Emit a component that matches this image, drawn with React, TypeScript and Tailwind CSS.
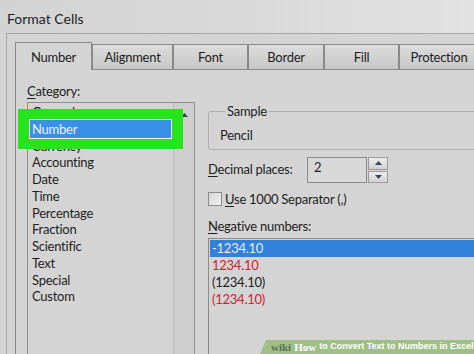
import React from "react";

const CATEGORIES = [
  "General",
  "Number",
  "Currency",
  "Accounting",
  "Date",
  "Time",
  "Percentage",
  "Fraction",
  "Scientific",
  "Text",
  "Special",
  "Custom",
];

const TABS = [
  { label: "Number", w: "w-[77px]", active: true },
  { label: "Alignment", w: "w-[81px]", active: false },
  { label: "Font", w: "w-[75px]", active: false },
  { label: "Border", w: "w-[76px]", active: false },
  { label: "Fill", w: "w-[75px]", active: false },
  { label: "Protection", w: "w-[80px]", active: false },
];

const NEGATIVES = [
  { text: "-1234.10", cls: "bg-[#3180da] text-[#e3eeff]" },
  { text: "1234.10", cls: "text-[#d0202e]" },
  { text: "(1234.10)", cls: "text-[#1c1c1c]" },
  { text: "(1234.10)", cls: "text-[#d0202e]" },
];

function Arrow({ up }: { up: boolean }) {
  return (
    <svg width="7" height="4" viewBox="0 0 7 4">
      <path d={up ? "M0 4 L3.5 0 L7 4 Z" : "M0 0 L3.5 4 L7 0 Z"} fill="#34465e" />
    </svg>
  );
}

export default function App() {
  return (
    <div className="relative w-[474px] h-[354px] overflow-hidden bg-[#d4d4d4] text-[#1e1e1e] font-['Lato',sans-serif] text-[13px] tracking-[-0.25px]">
      {/* title bar */}
      <div className="h-[33px] flex items-center pl-[7px] pt-[3px] text-[14px] tracking-normal bg-gradient-to-r from-[#d3d3d3] via-[#d9d9d9] to-[#e2e2e2]">
        Format Cells
      </div>

      <div className="ml-[6px] h-[321px] border-l border-t border-[#a6a6a6] pl-[8px] pt-[8px]">
        {/* tabs */}
        <div className="flex items-end h-[28px]">
          {TABS.map((t) =>
            t.active ? (
              <div
                key={t.label}
                className={`${t.w} shrink-0 h-[28px] border-l border-t border-r border-[#8a8a8a] bg-[#d4d4d4] flex items-center justify-center pt-[3px]`}
              >
                {t.label}
              </div>
            ) : (
              <div
                key={t.label}
                className={`${t.w} shrink-0 h-[26px] border border-[#8a8a8a] bg-gradient-to-b from-[#dcdcdc] to-[#c7c7c7] flex items-center justify-center pt-[2px]`}
              >
                {t.label}
              </div>
            )
          )}
        </div>

        {/* tab page */}
        <div className="flex h-[300px] border-l border-[#8a8a8a] pl-[11px]">
          {/* category column */}
          <div className="w-[168px] shrink-0 pt-[13px]">
            <div className="h-[17px] leading-[17px]">
              <span className="underline underline-offset-2">C</span>ategory:
            </div>
            <div className="mt-[2px] flex h-[270px] border border-[#8f8f8f]">
              <div className="flex-1 pt-[1px] pl-[4px]">
                {CATEGORIES.map((c) => (
                  <div key={c} className="h-[16.75px] leading-[16.75px]">
                    {c}
                  </div>
                ))}
              </div>
              <div className="w-[21px] shrink-0 border-l border-[#bcbcbc] bg-[#cecece] flex justify-center pt-[10px]">
                <Arrow up />
              </div>
            </div>
          </div>

          {/* right column */}
          <div className="ml-[13px] flex-1 min-w-0 pt-[33px]">
            <fieldset className="w-[290px] border border-[#aeaeae] rounded-[3px] pl-[11px] pb-[5px]">
              <legend className="ml-[5px] px-[2px] h-[17px] leading-[17px]">Sample</legend>
              <div className="mt-[7px] h-[17px] leading-[17px]">Pencil</div>
            </fieldset>

            <div className="mt-[7px] flex items-center h-[26px]">
              <div className="w-[99px] shrink-0">
                <span className="underline underline-offset-2">D</span>ecimal places:
              </div>
              <div className="w-[60px] h-[26px] border border-[#8a8a8a] bg-[#d8d8d8] pl-[6px] pt-[1px] leading-[17px]">
                2
              </div>
              <div className="ml-[1px] w-[20px] h-[26px] flex flex-col gap-[1px]">
                <div className="flex-1 border border-[#9a9a9a] bg-gradient-to-b from-[#ececec] to-[#d2d2d2] flex items-center justify-center">
                  <Arrow up />
                </div>
                <div className="flex-1 border border-[#9a9a9a] bg-gradient-to-b from-[#ececec] to-[#d2d2d2] flex items-center justify-center">
                  <Arrow up={false} />
                </div>
              </div>
            </div>

            <div className="mt-[9px] flex items-center h-[14px]">
              <div className="w-[14px] h-[14px] border border-[#8a8a8a] bg-gradient-to-br from-[#d6d6d6] to-[#f2f2f2]" />
              <div className="ml-[3px] leading-[17px]">
                <span className="underline underline-offset-2">U</span>se 1000 Separator (,)
              </div>
            </div>

            <div className="mt-[12px] h-[17px] leading-[17px]">
              <span className="underline underline-offset-2">N</span>egative numbers:
            </div>

            <div className="mt-[3px] w-[300px] h-[140px] border border-[#8a8a8a] pt-[1px] pl-[1px]">
              {NEGATIVES.map((n, i) => (
                <div key={i} className={`h-[17px] leading-[17px] pl-[2px] ${n.cls}`}>
                  {n.text}
                </div>
              ))}
            </div>
          </div>
        </div>
      </div>

      {/* highlight annotation */}
      <div className="absolute left-[18px] top-[109px] w-[165px] h-[40px] bg-[#26e31b] pl-[11px] pt-[10px]">
        <div className="w-[143px] h-[20px] border border-[#e8f1ff] bg-[#3a8fe6] text-[#eaf3ff] pl-[2px] leading-[18px]">
          Number
        </div>
      </div>

      {/* watermark */}
      <div className="absolute right-0 bottom-0 w-[214px] h-[14px] bg-[#9fbf86] [clip-path:polygon(6px_0,100%_0,100%_100%,0_100%)] flex items-center pl-[11px] font-['Liberation_Sans',sans-serif] text-[9px] font-bold tracking-normal text-white whitespace-nowrap">
        <span className="font-['Liberation_Serif',serif] text-[11px] text-[#5f6f52] mr-[3px]">wiki</span>
        <span className="text-[11px] font-['Liberation_Serif',serif] mr-[3px]">How</span>
        <span>to Convert Text to Numbers in Excel</span>
      </div>
    </div>
  );
}
